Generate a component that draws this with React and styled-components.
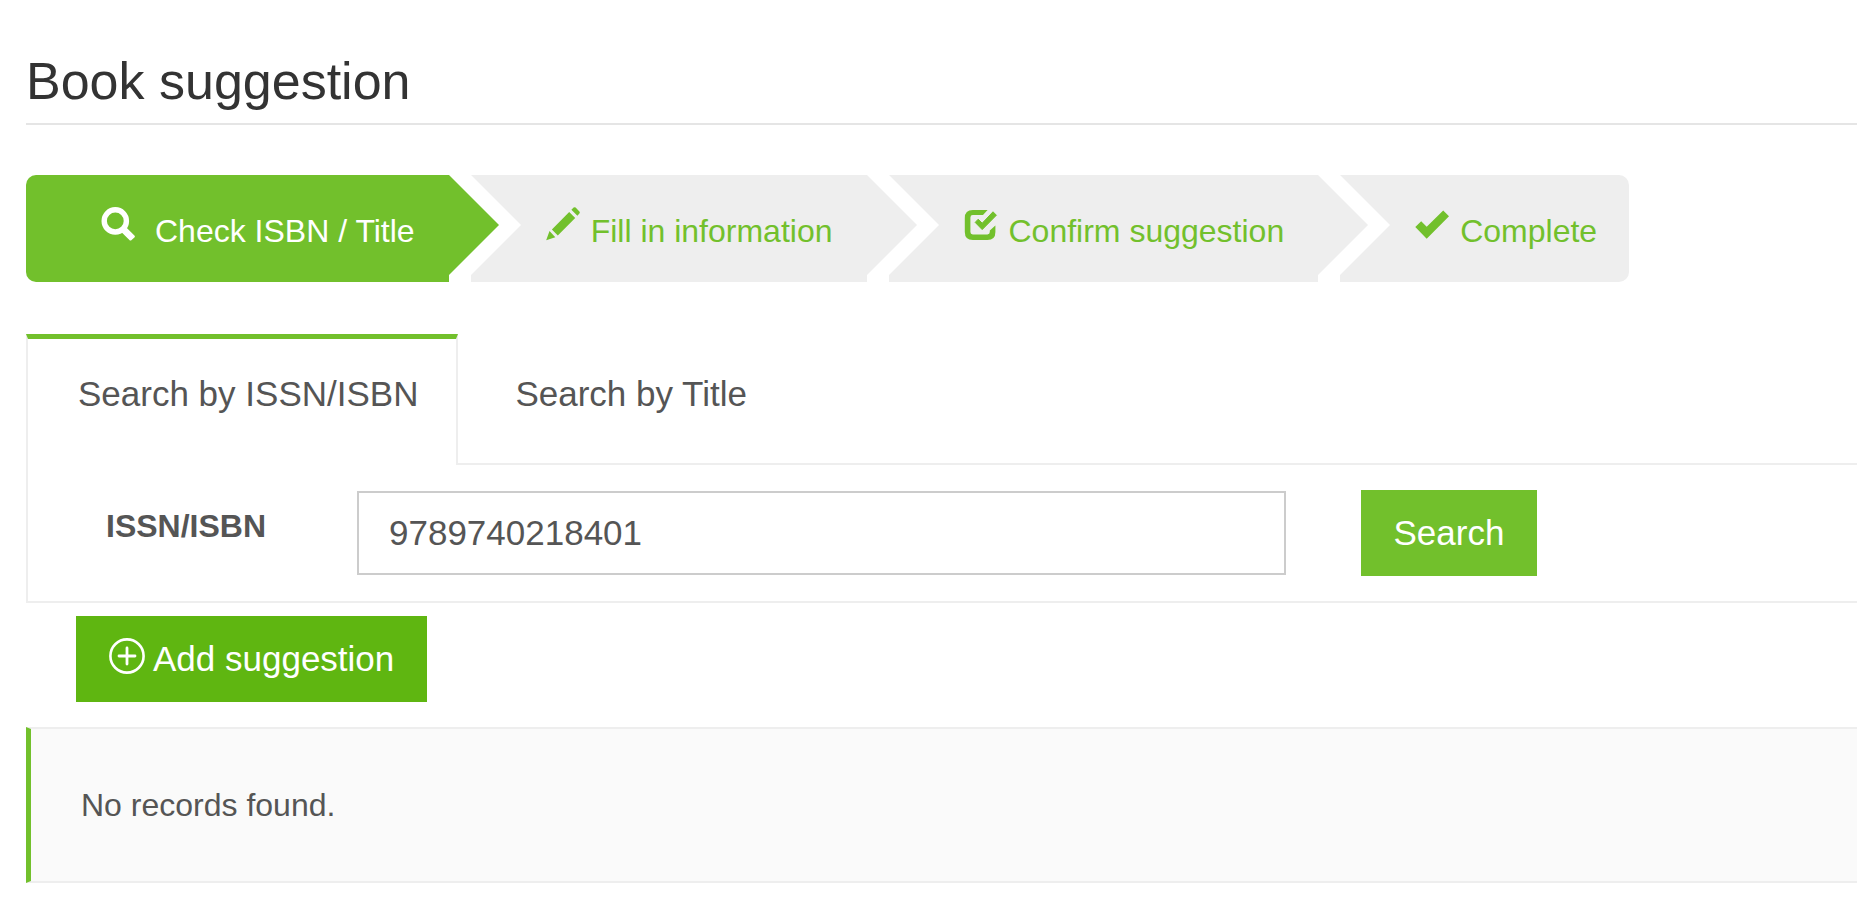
import React, {useState} from "react";
import styled, {createGlobalStyle} from "styled-components";

const SearchIcon = () => (
	<Icon viewBox="0 0 34 34" aria-hidden="true">
		<circle cx="14.3" cy="13.9" r="11.1" fill="none" stroke="currentColor" strokeWidth="5.4"/>
		<path d="M20.8 25.6L25.6 20.8L33.4 28.4Q34.4 29.4 33.4 30.4L30.6 33Q29.4 34 28.4 33Z" fill="currentColor"/>
	</Icon>
);

const PencilIcon = () => (
	<Icon viewBox="0 0 34 34" aria-hidden="true">
		<path
			d="M0.2 33.2L3.5 24L9.3 30.2ZM5.9 22.4L23.2 5L29.2 11L11.8 28.4ZM25.4 2.8L27.6 .6Q28.6 -.2 29.6 .6L33.4 4.6Q34.2 5.6 33.4 6.6L31.4 8.8Z"
			fill="currentColor"
		/>
	</Icon>
);

const ConfirmIcon = () => (
	<Icon viewBox="0 0 34 34" aria-hidden="true">
		<path
			d="M23.6 3L19 8H8.8Q6.4 8 6.4 10.4V25Q6.4 27.4 8.8 27.4H23.4Q25.8 27.4 25.8 25V23.6L31.4 18.4V25Q31.4 33 23.4 33H8.8Q.8 33 .8 25V11Q.8 3 8.8 3Z"
			fill="currentColor"
		/>
		<path
			d="M11.2 15.4L14.2 12.2L18.2 16.2L29 4.8L32.4 8.2L18.2 22.6Z"
			fill="currentColor"
			stroke="currentColor"
			strokeLinejoin="round"
		/>
	</Icon>
);

const CheckIcon = () => (
	<Icon viewBox="0 0 34 34" aria-hidden="true">
		<path d="M.3 20L6.2 14.2L11.7 19.7L28.2 3.6L34 9.2L11.7 31.8Z" fill="currentColor"/>
	</Icon>
);

const PlusIcon = () => (
	<PlusSvg viewBox="0 0 36 36" aria-hidden="true">
		<circle cx="18" cy="18" r="16.6" fill="none" stroke="currentColor" strokeWidth="2.6"/>
		<path d="M18 10V26M10 18H26" fill="none" stroke="currentColor" strokeWidth="2.8" strokeLinecap="round"/>
	</PlusSvg>
);

const steps = [
	{title: "Check ISBN / Title", icon: <SearchIcon/>},
	{title: "Fill in information", icon: <PencilIcon/>},
	{title: "Confirm suggestion", icon: <ConfirmIcon/>},
	{title: "Complete", icon: <CheckIcon/>},
];

const tabs = [
	{id: "isbn", title: "Search by ISSN/ISBN", label: "ISSN/ISBN"},
	{id: "title", title: "Search by Title", label: "Title"},
];

const App = () => {

	const [active, setActive] = useState("isbn")
	const [values, setValues] = useState({isbn: "9789740218401", title: ""})
	const current = tabs.find((tab) => tab.id === active)

	return (
		<Page>
			<GlobalStyle/>
			<Title>Book suggestion</Title>
			<Steps>
				{steps.map((step, i) => (
					<Step key={step.title} $active={i === 0}>
						{step.icon}
						<span>{step.title}</span>
					</Step>
				))}
			</Steps>
			<Tabs role="tablist">
				{tabs.map((tab) => (
					<Tab
						key={tab.id}
						type="button"
						role="tab"
						aria-selected={tab.id === active}
						$active={tab.id === active}
						onClick={() => setActive(tab.id)}
					>
						{tab.title}
					</Tab>
				))}
			</Tabs>
			<SearchForm onSubmit={(e) => e.preventDefault()}>
				<Label htmlFor="query">{current.label}</Label>
				<Input
					id="query"
					type="text"
					value={values[active]}
					onChange={(e) => setValues({...values, [active]: e.target.value})}
				/>
				<Button type="submit">Search</Button>
			</SearchForm>
			<Actions>
				<Button type="button" $dark>
					<PlusIcon/>
					Add suggestion
				</Button>
			</Actions>
			<Records>No records found.</Records>
		</Page>
	);
};

export default App;

const GlobalStyle = createGlobalStyle`
  * {
    box-sizing: border-box;
  }

  body {
    margin: 0;
    background: #ffffff;
    color: #555555;
    font-family: "Liberation Sans", Arial, sans-serif;
    font-size: 32px;
    line-height: 46px;
  }

  button,
  input {
    font-family: inherit;
  }
`;

const Page = styled.main`
  padding: 50px 0 26px 26px;
`;

const Title = styled.h1`
  margin: 0 0 50px;
  padding-bottom: 11px;
  border-bottom: 2px solid #e5e5e5;
  font-weight: 400;
  font-size: 52px;
  line-height: 62px;
  color: #333333;
`;

const Steps = styled.ol`
  display: flex;
  gap: 22px;
  margin: 0 0 52px;
  padding: 0;
  list-style: none;
`;

const Icon = styled.svg`
  flex: none;
  width: 34px;
  height: 34px;
  margin-bottom: 10px;
`;

const Step = styled.li`
  position: relative;
  display: flex;
  align-items: center;
  gap: 11px;
  height: 107px;
  padding: 0 34px 0 75px;
  background: ${({$active}) => ($active ? "#72c02c" : "#eeeeee")};
  color: ${({$active}) => ($active ? "#ffffff" : "#72c02c")};
  white-space: nowrap;

  span {
    padding-top: 4px;
  }

  &:first-child {
    gap: 20px;
    border-radius: 10px 0 0 10px;
  }

  &:last-child {
    padding-right: 32px;
    border-radius: 0 10px 10px 0;
  }

  /* arrow head over the next step */
  &:not(:last-child)::after {
    content: "";
    position: absolute;
    z-index: 2;
    top: 0;
    left: 100%;
    border: 50px solid transparent;
    border-left-color: ${({$active}) => ($active ? "#72c02c" : "#eeeeee")};
    border-right-width: 0;
  }

  /* white notch behind the previous arrow */
  &:not(:first-child)::before {
    content: "";
    position: absolute;
    z-index: 1;
    top: 0;
    left: 0;
    border: 50px solid transparent;
    border-left-color: #ffffff;
    border-right-width: 0;
  }
`;

const Tabs = styled.div`
  display: flex;
  gap: 5px;
  box-shadow: inset 0 -2px #eeeeee;
`;

const Tab = styled.button`
  padding: 31px 38px 47px 50px;
  border: 2px solid transparent;
  border-top-width: 5px;
  border-bottom: 0;
  background: transparent;
  color: #555555;
  font-size: 35px;
  line-height: 48px;
  cursor: pointer;
  ${({$active}) => $active && `
    border-color: #72c02c #eeeeee;
    background: #ffffff;
  `}
`;

const SearchForm = styled.form`
  display: flex;
  align-items: center;
  padding: 25px 0;
  border: 2px solid #eeeeee;
  border-width: 0 0 2px 2px;
`;

const Label = styled.label`
  width: 329px;
  padding: 0 0 14px 78px;
  font-weight: 700;
`;

const Input = styled.input`
  width: calc(50% + 14px);
  height: 84px;
  margin-right: 75px;
  padding: 0 30px;
  border: 2px solid #cccccc;
  background: #ffffff;
  color: #555555;
  font-size: 35px;
`;

const Button = styled.button`
  display: flex;
  align-items: center;
  gap: 8px;
  height: 86px;
  padding: 0 33px;
  border: none;
  background: ${({$dark}) => ($dark ? "#5fb611" : "#72c02c")};
  color: #ffffff;
  font-size: 35px;
  line-height: 50px;
  cursor: pointer;
`;

const PlusSvg = styled.svg`
  width: 36px;
  height: 36px;
  margin-bottom: 6px;
`;

const Actions = styled.div`
  padding: 13px 50px 25px;
`;

const Records = styled.div`
  padding: 53px 50px;
  border: 2px solid #eeeeee;
  border-right: 0;
  border-left: 5px solid #72c02c;
  background: #fafafa;
`;
